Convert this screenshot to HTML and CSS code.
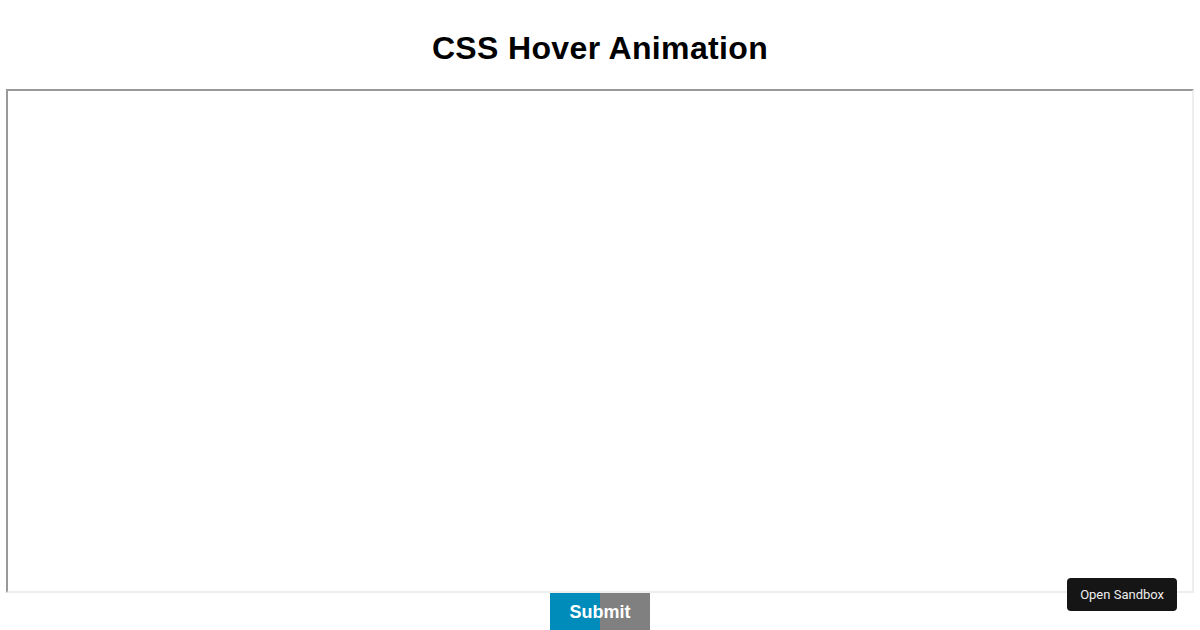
FILE: index.html
```html
<!DOCTYPE html>
<html>
<head>
    <meta charset="utf-8">
    <link rel="stylesheet" href="styles.css">
</head>
<body>
    <h1 class="title">CSS Hover Animation</h1>

    <div class="frame"></div>

    <div class="actions">
        <button class="submit">Submit</button>
    </div>

    <a href="#" class="sandbox">Open Sandbox</a>
</body>
</html>
```

FILE: styles.css
```css
body {
    margin: 0;
    font-family: 'Liberation Sans', Arial, sans-serif;
    background: #fff;
    overflow: hidden;
}

.title {
    font-size: 32px;
    font-weight: bold;
    line-height: 37px;
    letter-spacing: 0.35px;
    text-align: center;
    color: #000;
    margin: 0 0 22px 0;
    padding-top: 30px;
}

.frame {
    box-sizing: border-box;
    height: 504px;
    margin: 0 6px;
    border: 2px solid;
    border-color: #999 #eee #eee #999;
}

.actions {
    display: flex;
    justify-content: center;
}

.submit {
    width: 100px;
    padding: 9px 0 7px;
    border: none;
    font-family: 'Liberation Sans', Arial, sans-serif;
    font-size: 18px;
    font-weight: bold;
    color: #fff;
    background: linear-gradient(to right, #008cba 50%, #808080 50%);
    cursor: pointer;
}

.sandbox {
    position: fixed;
    right: 23px;
    bottom: 19px;
    padding: 0 13px;
    height: 33px;
    line-height: 33px;
    border-radius: 4px;
    background: #151515;
    color: #eee;
    font-family: Roboto, sans-serif;
    font-size: 13px;
    text-decoration: none;
}
```
